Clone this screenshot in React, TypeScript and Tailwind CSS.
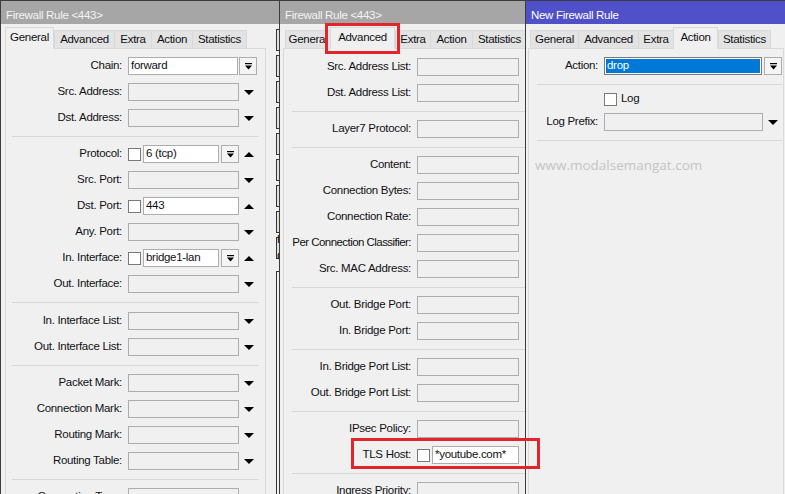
import React from 'react';

type Kind = 'drop' | 'btn' | 'check' | 'checkBtn' | 'plain' | 'checkPlain';

type Item =
  | { sep: true; h: string }
  | { sep?: false; label: string; kind: Kind; value?: string; arrow?: 'up' | 'down'; tight?: boolean };

const Tri = ({ up }: { up?: boolean }) => (
  <svg width="10" height="5" viewBox="0 0 10 5" className="shrink-0">
    <path d={up ? 'M0 5H10L5 0Z' : 'M0 0H10L5 5Z'} fill="#000" />
  </svg>
);

const DropBtn = () => (
  <div className="flex h-[18px] w-[18px] shrink-0 items-center justify-center border border-[#adadad] bg-[#f4f4f4]">
    <svg width="7" height="7" viewBox="0 0 7 7">
      <rect x="0" y="0" width="7" height="1.2" fill="#000" />
      <path d="M0 2.5H7L3.5 6.5Z" fill="#000" />
    </svg>
  </div>
);

const Check = () => <div className="h-[13px] w-[13px] shrink-0 border border-[#7a7a7a] bg-white" />;

const Input = ({ w, value }: { w: string; value?: string }) => (
  <div
    className={`${w} flex h-[18px] shrink-0 items-center overflow-hidden whitespace-nowrap border border-[#adadad] pl-[2px] ${
      value ? 'bg-white' : 'bg-[#f0f0f0]'
    }`}
  >
    {value}
  </div>
);

const Sep = ({ h, px }: { h: string; px: string }) => (
  <div className={`flex ${h} items-center ${px}`}>
    <div className="h-px w-full bg-[#d7d7d7]" />
  </div>
);

const Tab = ({ label, w, sel, last }: { label: string; w: string; sel?: boolean; last?: boolean }) =>
  sel ? (
    <div
      className={`${w} relative z-10 -mb-px flex h-[22px] shrink-0 justify-center border border-b-0 border-[#d9d9d9] bg-[#f0f0f0] pt-[2px] leading-[14px]`}
    >
      {label}
    </div>
  ) : (
    <div
      className={`${w} flex h-[18px] shrink-0 items-center justify-center overflow-hidden whitespace-nowrap border-t border-l ${
        last ? 'border-r' : ''
      } border-[#d9d9d9] bg-[#e3e3e3]`}
    >
      {label}
    </div>
  );

const TitleBar = ({ text, active }: { text: string; active?: boolean }) => (
  <div
    className={`h-[23px] shrink-0 whitespace-nowrap pl-[5px] pt-[8px] leading-[12px] ${
      active ? 'bg-[#5050c8] text-white' : 'bg-[#a6a6a6] text-[#f4f4f4]'
    }`}
  >
    {text}
  </div>
);

// left window: labels end at 122, field block 111px wide
const LeftRow = ({ it }: { it: Item }) => {
  if (it.sep) return <Sep h={it.h} px="px-[6px]" />;
  return (
    <div className="flex h-[26px] items-center">
      <span className="w-[122px] shrink-0 whitespace-nowrap pr-[6px] text-right">{it.label}:</span>
      {it.kind === 'btn' && (
        <div className="flex gap-[1px]">
          <Input w="w-[110px]" value={it.value} />
          <DropBtn />
        </div>
      )}
      {it.kind === 'drop' && (
        <>
          <Input w="w-[111px]" value={it.value} />
          <div className="ml-[5px]">
            <Tri up={it.arrow === 'up'} />
          </div>
        </>
      )}
      {it.kind === 'checkBtn' && (
        <>
          <div className="flex w-[111px] items-center">
            <Check />
            <div className="ml-[2px]">
              <Input w="w-[76px]" value={it.value} />
            </div>
            <div className="ml-[2px]">
              <DropBtn />
            </div>
          </div>
          <div className="ml-[5px]">
            <Tri up />
          </div>
        </>
      )}
      {it.kind === 'checkPlain' && (
        <>
          <div className="flex w-[111px] items-center">
            <Check />
            <div className="ml-[2px]">
              <Input w="w-[96px]" value={it.value} />
            </div>
          </div>
          <div className="ml-[5px]">
            <Tri up />
          </div>
        </>
      )}
    </div>
  );
};

const MidRow = ({ it }: { it: Item }) => {
  if (it.sep) return <Sep h={it.h} px="pl-[8px]" />;
  return (
    <div className="flex h-[26px] items-center">
      <span
        className={`w-[133px] shrink-0 whitespace-nowrap pr-[6px] text-right ${it.tight ? 'tracking-[-0.55px]' : ''}`}
      >
        {it.label}:
      </span>
      {it.kind === 'checkPlain' ? (
        <div className="flex items-center">
          <Check />
          <div className="ml-[2px]">
            <Input w="w-[87px]" value={it.value} />
          </div>
        </div>
      ) : (
        <Input w="w-[102px]" value={it.value} />
      )}
    </div>
  );
};

const leftItems: Item[] = [
  { label: 'Chain', kind: 'btn', value: 'forward' },
  { label: 'Src. Address', kind: 'drop' },
  { label: 'Dst. Address', kind: 'drop' },
  { sep: true, h: 'h-[10px]' },
  { label: 'Protocol', kind: 'checkBtn', value: '6 (tcp)' },
  { label: 'Src. Port', kind: 'drop' },
  { label: 'Dst. Port', kind: 'checkPlain', value: '443' },
  { label: 'Any. Port', kind: 'drop' },
  { label: 'In. Interface', kind: 'checkBtn', value: 'bridge1-lan' },
  { label: 'Out. Interface', kind: 'drop' },
  { sep: true, h: 'h-[11px]' },
  { label: 'In. Interface List', kind: 'drop' },
  { label: 'Out. Interface List', kind: 'drop' },
  { sep: true, h: 'h-[10px]' },
  { label: 'Packet Mark', kind: 'drop' },
  { label: 'Connection Mark', kind: 'drop' },
  { label: 'Routing Mark', kind: 'drop' },
  { label: 'Routing Table', kind: 'drop' },
  { sep: true, h: 'h-[10px]' },
  { label: 'Connection Type', kind: 'drop' },
  { label: 'Connection State', kind: 'drop' },
];

const midItems: Item[] = [
  { label: 'Src. Address List', kind: 'plain' },
  { label: 'Dst. Address List', kind: 'plain' },
  { sep: true, h: 'h-[10px]' },
  { label: 'Layer7 Protocol', kind: 'plain' },
  { sep: true, h: 'h-[10px]' },
  { label: 'Content', kind: 'plain' },
  { label: 'Connection Bytes', kind: 'plain' },
  { label: 'Connection Rate', kind: 'plain' },
  { label: 'Per Connection Classifier', kind: 'plain', tight: true },
  { label: 'Src. MAC Address', kind: 'plain' },
  { sep: true, h: 'h-[10px]' },
  { label: 'Out. Bridge Port', kind: 'plain' },
  { label: 'In. Bridge Port', kind: 'plain' },
  { sep: true, h: 'h-[10px]' },
  { label: 'In. Bridge Port List', kind: 'plain' },
  { label: 'Out. Bridge Port List', kind: 'plain' },
  { sep: true, h: 'h-[10px]' },
  { label: 'IPsec Policy', kind: 'plain' },
  { label: 'TLS Host', kind: 'checkPlain', value: '*youtube.com*' },
  { sep: true, h: 'h-[10px]' },
  { label: 'Ingress Priority', kind: 'plain' },
];

const sideButtons = ['OK', 'Cancel', 'Apply', 'Disable', 'Comment', 'Copy', 'Remove', 'Reset Counters', 'Reset All Counters'];

export default function App() {
  return (
    <div className="relative flex h-[494px] w-[785px] overflow-hidden bg-[#f0f0f0] font-['Liberation_Sans',Arial,sans-serif] text-[11.5px] tracking-[-0.3px] text-[#101014]">
      {/* left window */}
      <div className="flex h-full w-[279px] shrink-0 flex-col overflow-hidden border-l border-t border-[#3c3c3c] bg-[#f0f0f0]">
        <TitleBar text="Firewall Rule <443>" />
        <div className="flex">
          <div className="ml-[4px] w-[261px] shrink-0">
            <div className="flex h-[24px] items-end pl-0">
              <Tab label="General" w="w-[49px]" sel />
              <Tab label="Advanced" w="w-[60px]" />
              <Tab label="Extra" w="w-[37px]" />
              <Tab label="Action" w="w-[41px]" />
              <Tab label="Statistics" w="w-[55px]" last />
            </div>
            <div className="h-[600px] border border-[#d9d9d9] bg-[#f0f0f0] pt-[4px]">
              {leftItems.map((it, i) => (
                <LeftRow key={i} it={it} />
              ))}
            </div>
          </div>
          <div className="ml-[10px] flex shrink-0 flex-col gap-[4px] pt-[5px]">
            {sideButtons.map((b) => (
              <div key={b} className="flex h-[22px] w-[80px] items-center justify-center border border-[#333] bg-[#e1e1e1]">
                {b}
              </div>
            ))}
            <div className="mt-[8px] h-[300px] w-[80px] border border-[#333]" />
          </div>
        </div>
      </div>

      {/* middle window */}
      <div className="flex h-full w-[246px] shrink-0 flex-col overflow-hidden border-l border-t border-[#3c3c3c] bg-[#f0f0f0]">
        <TitleBar text="Firewall Rule <443>" />
        <div className="ml-[3px] w-[300px] shrink-0">
          <div className="flex h-[24px] items-end pl-[2px]">
            <Tab label="General" w="w-[45px]" />
            <Tab label="Advanced" w="w-[65px]" sel />
            <Tab label="Extra" w="w-[35px]" />
            <Tab label="Action" w="w-[42px]" />
            <Tab label="Statistics" w="w-[55px]" last />
          </div>
          <div className="h-[600px] border border-[#d9d9d9] bg-[#f0f0f0] pt-[5px]">
            {midItems.map((it, i) => (
              <MidRow key={i} it={it} />
            ))}
          </div>
        </div>
      </div>

      {/* right window */}
      <div className="flex h-full flex-1 flex-col overflow-hidden border-l border-t border-[#3c3c3c] bg-[#f0f0f0]">
        <TitleBar text="New Firewall Rule" active />
        <div className="ml-[2px] w-[256px] shrink-0">
          <div className="flex h-[24px] items-end pl-[2px]">
            <Tab label="General" w="w-[48px]" />
            <Tab label="Advanced" w="w-[60px]" />
            <Tab label="Extra" w="w-[35px]" />
            <Tab label="Action" w="w-[45px]" sel />
            <Tab label="Statistics" w="w-[53px]" last />
          </div>
          <div className="h-[600px] border border-[#d9d9d9] bg-[#f0f0f0] pt-[4px]">
            <div className="flex h-[26px] items-center">
              <span className="w-[75px] shrink-0 whitespace-nowrap pr-[6px] text-right">Action:</span>
              <div className="flex h-[18px] w-[158px] items-center border border-[#7a7a7a] bg-white p-px">
                <div className="flex h-full w-full items-center bg-[#0078d7] pl-px text-white">drop</div>
              </div>
              <div className="ml-[2px]">
                <DropBtn />
              </div>
            </div>
            <Sep h="h-[10px]" px="pl-[8px] pr-[1px]" />
            <div className="flex h-[20px] items-center pl-[75px]">
              <Check />
              <span className="ml-[4px]">Log</span>
            </div>
            <div className="flex h-[26px] items-center">
              <span className="w-[75px] shrink-0 whitespace-nowrap pr-[6px] text-right">Log Prefix:</span>
              <Input w="w-[159px]" />
              <div className="ml-[5px]">
                <Tri />
              </div>
            </div>
            <Sep h="h-[10px]" px="pl-[8px] pr-[1px]" />
            <div className="mt-[10px] pl-[6px] font-['Open_Sans',sans-serif] text-[13.5px] leading-[20px] tracking-normal text-[#c4c4c4]">
              www.modalsemangat.com
            </div>
          </div>
        </div>
      </div>

      {/* red highlight boxes */}
      <div className="absolute left-[325px] top-[23px] h-[31px] w-[75px] border-[3px] border-[#e3242b]" />
      <div className="absolute left-[351px] top-[438px] h-[31px] w-[189px] border-[3px] border-[#e3242b]" />
    </div>
  );
}
